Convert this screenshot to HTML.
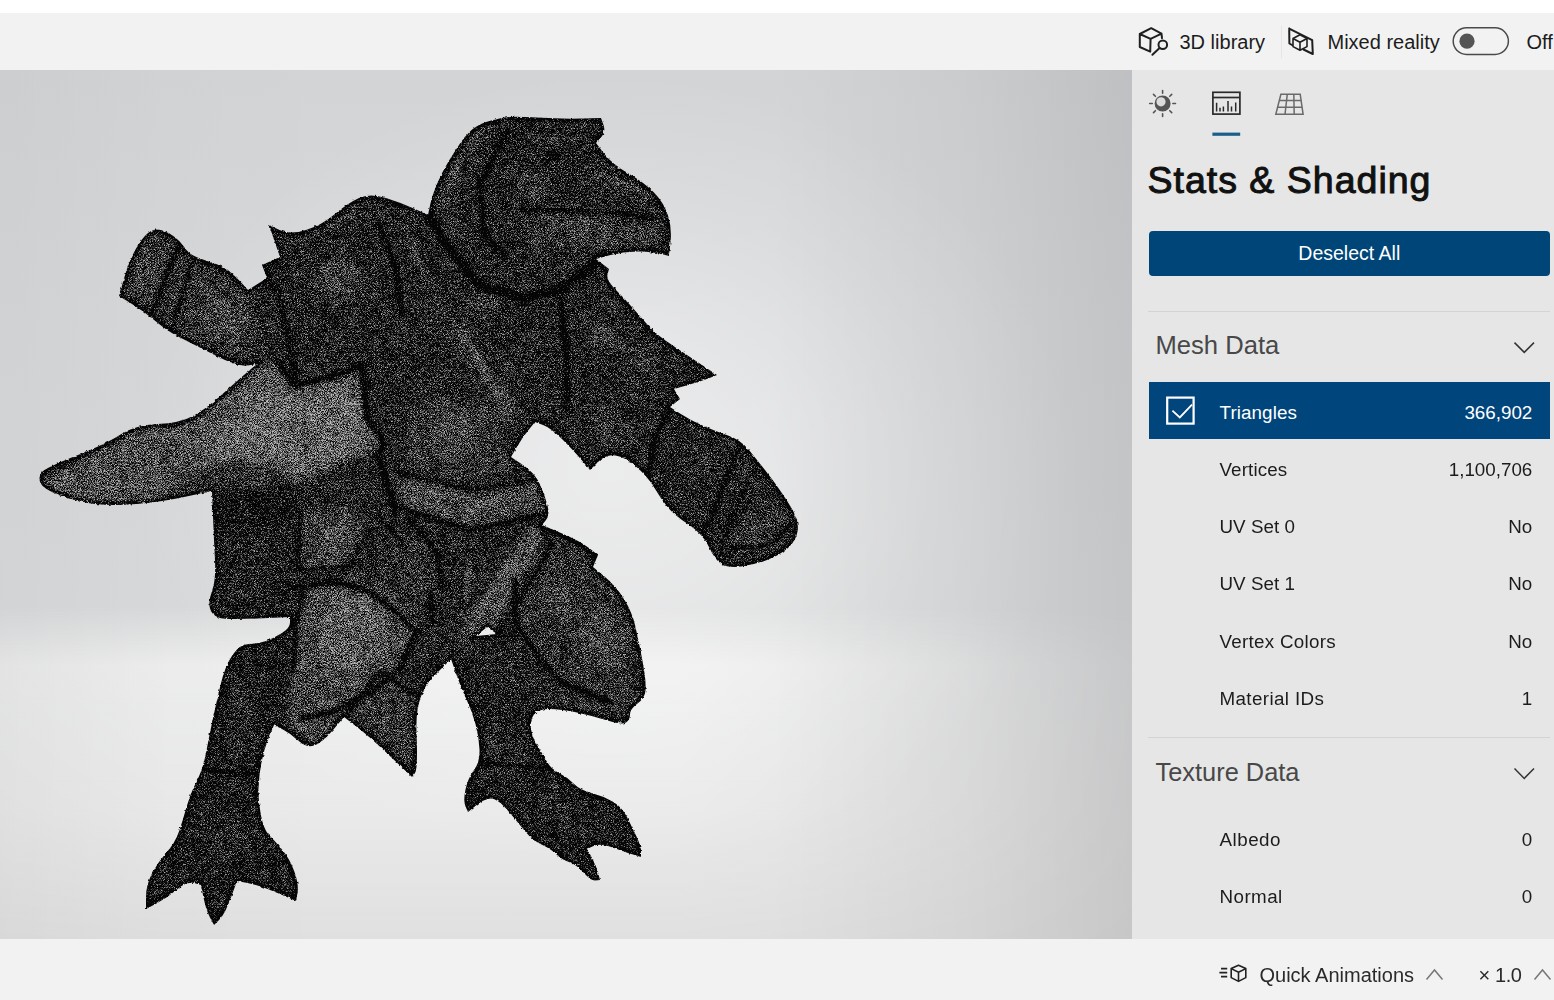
<!DOCTYPE html>
<html lang="en">
<head>
<meta charset="utf-8">
<title>3D Viewer</title>
<style>
html,body{margin:0;padding:0;}
body{width:1554px;height:1000px;overflow:hidden;background:#fff;font-family:"Liberation Sans",sans-serif;color:#1a1a1a;position:relative;}
.abs{position:absolute;}
#topbar{left:0;top:13px;width:1554px;height:57px;background:#f2f2f2;}
#bottombar{left:0;top:939px;width:1554px;height:61px;background:#f2f2f2;}
#viewport{left:0;top:70px;width:1132px;height:869px;overflow:hidden;background:#e4e4e4;}
#panel{left:1132px;top:70px;width:422px;height:869px;background:#e6e6e6;overflow:hidden;}
.t{position:absolute;white-space:nowrap;line-height:1;transform-origin:0 0;}
.row{position:absolute;left:17px;width:401px;height:57px;}
.row .lbl{position:absolute;left:71px;font-size:18.5px;top:19px;line-height:1;white-space:nowrap;}
.row .val{position:absolute;right:18px;font-size:18.5px;top:19px;line-height:1;white-space:nowrap;}
.sel{background:#004578;color:#fff;}
.hr{position:absolute;left:16px;width:402px;height:1px;background:#d2d2d2;}
.sec{position:absolute;left:23px;font-size:25px;color:#444;line-height:1;white-space:nowrap;}
</style>
</head>
<body>
<div id="topbar" class="abs"></div>
<div id="viewport" class="abs">

<svg class="abs" style="left:0;top:0" width="1132" height="870" viewBox="0 0 1132 870">
<defs>
<linearGradient id="bgv" x1="0" y1="0" x2="0" y2="1">
<stop offset="0" stop-color="#d3d4d6"/><stop offset="0.3" stop-color="#d7d8da"/><stop offset="0.62" stop-color="#d9dadb"/><stop offset="1" stop-color="#dcdcdc"/>
</linearGradient>
<radialGradient id="bgr" gradientUnits="userSpaceOnUse" cx="0" cy="0" r="1" gradientTransform="translate(610 400) scale(470 400)">
<stop offset="0" stop-color="#fff" stop-opacity="0.5"/><stop offset="0.35" stop-color="#fff" stop-opacity="0.36"/><stop offset="0.7" stop-color="#fff" stop-opacity="0.13"/><stop offset="1" stop-color="#fff" stop-opacity="0"/>
</radialGradient>
<linearGradient id="flv" x1="0" y1="0" x2="0" y2="1">
<stop offset="0.615" stop-color="#fff" stop-opacity="0"/><stop offset="0.685" stop-color="#fff" stop-opacity="0.55"/><stop offset="0.85" stop-color="#fff" stop-opacity="0.42"/><stop offset="1" stop-color="#fff" stop-opacity="0.12"/>
</linearGradient>
<linearGradient id="flh" x1="0" y1="0" x2="1" y2="0">
<stop offset="0" stop-color="#fff" stop-opacity="0.8"/><stop offset="0.15" stop-color="#fff" stop-opacity="1"/><stop offset="0.6" stop-color="#fff" stop-opacity="1"/><stop offset="0.85" stop-color="#fff" stop-opacity="0.5"/><stop offset="1" stop-color="#fff" stop-opacity="0.15"/>
</linearGradient>
<mask id="flm"><rect width="1132" height="870" fill="url(#flh)"/></mask>
<linearGradient id="bgh" x1="0" y1="0" x2="1" y2="0">
<stop offset="0" stop-color="#000008" stop-opacity="0.03"/><stop offset="0.15" stop-color="#000008" stop-opacity="0.01"/><stop offset="0.3" stop-color="#000008" stop-opacity="0"/><stop offset="0.68" stop-color="#000008" stop-opacity="0"/><stop offset="0.85" stop-color="#000008" stop-opacity="0.04"/><stop offset="1" stop-color="#000008" stop-opacity="0.095"/>
</linearGradient>
<filter id="rough" filterUnits="userSpaceOnUse" x="0" y="0" width="840" height="870"><feTurbulence type="fractalNoise" baseFrequency="0.35" numOctaves="2" seed="9" result="r"/><feDisplacementMap in="SourceGraphic" in2="r" scale="2.8" xChannelSelector="R" yChannelSelector="G"/></filter>
<mask id="sil" maskUnits="userSpaceOnUse" x="0" y="0" width="840" height="870"><path d="M148.0,163.0 Q154.0,158.0 161.0,160.0 Q168.0,162.0 174.0,166.5 Q180.0,171.0 183.0,175.5 Q186.0,180.0 189.5,183.0 Q193.0,186.0 201.5,189.0 Q210.0,192.0 217.5,194.5 Q225.0,197.0 231.5,203.0 Q238.0,209.0 243.0,214.5 L248.0,220.0 L257.5,214.0 L267.0,208.0 L264.5,201.5 L262.0,195.0 L271.0,191.0 L280.0,187.0 L274.5,171.0 L269.0,155.0 L279.5,160.0 Q290.0,165.0 306.0,160.0 Q322.0,155.0 335.0,144.0 Q348.0,133.0 359.0,128.0 Q370.0,123.0 386.0,128.0 Q402.0,133.0 415.0,139.0 L428.0,145.0 L430.0,135.5 Q432.0,126.0 437.0,114.0 Q442.0,102.0 448.5,91.5 Q455.0,81.0 460.0,73.5 Q465.0,66.0 471.0,60.5 Q477.0,55.0 486.0,52.0 Q495.0,49.0 504.0,47.5 Q513.0,46.0 537.0,47.5 Q561.0,49.0 581.0,48.5 L601.0,48.0 L603.5,55.0 Q606.0,62.0 601.0,67.5 L596.0,73.0 L604.0,83.5 Q612.0,94.0 628.5,103.5 Q645.0,113.0 654.5,123.0 Q664.0,133.0 668.0,145.5 Q672.0,158.0 670.5,172.0 L669.0,186.0 L661.5,184.0 Q654.0,182.0 639.5,181.5 Q625.0,181.0 610.5,185.0 L596.0,189.0 L602.5,194.0 L609.0,199.0 L607.5,204.5 Q606.0,210.0 615.5,219.5 Q625.0,229.0 635.0,240.5 Q645.0,252.0 651.0,258.5 Q657.0,265.0 673.5,276.0 Q690.0,287.0 703.5,296.0 L717.0,305.0 L709.5,308.0 Q702.0,311.0 688.0,315.0 L674.0,319.0 L677.0,324.0 L680.0,329.0 L675.0,333.0 L670.0,337.0 L680.0,343.5 Q690.0,350.0 702.5,355.5 Q715.0,361.0 728.0,365.5 Q741.0,370.0 749.0,380.0 Q757.0,390.0 765.0,400.0 Q773.0,410.0 781.5,422.5 Q790.0,435.0 794.5,443.5 Q799.0,452.0 797.5,461.5 Q796.0,471.0 788.0,478.0 Q780.0,485.0 767.0,490.0 Q754.0,495.0 741.0,496.5 Q728.0,498.0 721.5,494.0 Q715.0,490.0 709.0,477.0 Q703.0,464.0 688.5,454.5 Q674.0,445.0 667.5,437.0 Q661.0,429.0 654.5,418.0 Q648.0,407.0 636.5,397.0 Q625.0,387.0 615.5,385.5 Q606.0,384.0 598.0,392.0 L590.0,400.0 L582.0,390.5 Q574.0,381.0 562.5,369.5 Q551.0,358.0 543.0,355.0 L535.0,352.0 L528.5,360.0 Q522.0,368.0 516.5,377.5 L511.0,387.0 L523.0,395.0 Q535.0,403.0 540.0,414.5 Q545.0,426.0 547.5,435.5 Q550.0,445.0 546.0,450.0 L542.0,455.0 L561.0,463.0 Q580.0,471.0 589.0,478.0 L598.0,485.0 L595.5,491.0 L593.0,497.0 L604.5,506.5 Q616.0,516.0 624.0,529.0 Q632.0,542.0 635.0,555.0 Q638.0,568.0 640.5,580.5 Q643.0,593.0 644.5,603.0 Q646.0,613.0 645.5,620.5 Q645.0,628.0 637.5,633.5 Q630.0,639.0 630.0,644.5 Q630.0,650.0 626.0,652.5 Q622.0,655.0 607.5,650.5 Q593.0,646.0 577.0,642.5 Q561.0,639.0 549.5,639.0 Q538.0,639.0 534.0,644.5 Q530.0,650.0 531.0,658.5 Q532.0,667.0 537.0,675.0 Q542.0,683.0 546.5,691.0 Q551.0,699.0 559.0,703.0 Q567.0,707.0 573.5,713.5 Q580.0,720.0 591.5,723.0 Q603.0,726.0 612.5,731.5 Q622.0,737.0 627.0,747.0 Q632.0,757.0 636.5,766.5 Q641.0,776.0 641.0,781.5 L641.0,787.0 L633.0,784.5 Q625.0,782.0 612.5,777.5 Q600.0,773.0 593.5,776.0 L587.0,779.0 L591.5,787.0 Q596.0,795.0 598.0,802.5 L600.0,810.0 L595.5,810.5 Q591.0,811.0 584.0,803.0 Q577.0,795.0 569.0,792.0 Q561.0,789.0 556.0,784.0 Q551.0,779.0 541.5,774.5 Q532.0,770.0 524.0,760.0 Q516.0,750.0 506.5,739.0 Q497.0,728.0 490.5,728.5 Q484.0,729.0 476.0,735.5 L468.0,742.0 L465.5,736.5 Q463.0,731.0 465.5,719.5 Q468.0,708.0 474.0,700.0 Q480.0,692.0 479.5,679.5 Q479.0,667.0 475.5,654.0 Q472.0,641.0 466.5,629.5 Q461.0,618.0 456.0,603.5 L451.0,589.0 L433.0,607.0 Q415.0,625.0 416.5,662.0 Q418.0,699.0 415.0,703.0 L412.0,707.0 L391.0,687.0 Q370.0,667.0 357.0,657.0 L344.0,647.0 L333.0,660.0 Q322.0,673.0 314.0,675.5 Q306.0,678.0 298.0,670.5 Q290.0,663.0 282.0,659.0 L274.0,655.0 L269.0,667.0 Q264.0,679.0 261.5,692.0 Q259.0,705.0 258.5,718.0 Q258.0,731.0 261.0,745.5 Q264.0,760.0 269.0,765.0 Q274.0,770.0 282.0,779.5 Q290.0,789.0 294.5,802.0 Q299.0,815.0 297.5,823.0 L296.0,831.0 L288.0,827.5 Q280.0,824.0 269.0,819.5 Q258.0,815.0 247.5,813.0 L237.0,811.0 L231.0,827.5 Q225.0,844.0 219.5,849.5 L214.0,855.0 L210.0,847.5 Q206.0,840.0 203.5,827.5 L201.0,815.0 L194.0,813.0 Q187.0,811.0 177.0,819.5 Q167.0,828.0 156.5,833.5 L146.0,839.0 L146.0,827.0 Q146.0,815.0 152.0,803.5 Q158.0,792.0 166.5,782.5 Q175.0,773.0 179.0,761.5 Q183.0,750.0 186.5,737.0 Q190.0,724.0 196.5,711.5 Q203.0,699.0 206.0,683.0 Q209.0,667.0 212.5,650.5 Q216.0,634.0 220.5,615.0 Q225.0,596.0 232.5,585.0 Q240.0,574.0 249.0,574.0 Q258.0,574.0 266.0,571.0 Q274.0,568.0 282.0,563.0 Q290.0,558.0 290.0,552.5 L290.0,547.0 L257.5,548.5 Q225.0,550.0 218.5,547.5 Q212.0,545.0 210.0,538.5 Q208.0,532.0 212.0,521.0 Q216.0,510.0 215.0,490.5 Q214.0,471.0 213.0,446.0 L212.0,421.0 L186.5,426.5 Q161.0,432.0 137.0,434.0 Q113.0,436.0 95.0,434.0 Q77.0,432.0 60.0,425.5 Q43.0,419.0 40.5,413.0 Q38.0,407.0 41.5,402.5 Q45.0,398.0 75.5,386.0 Q106.0,374.0 120.5,364.5 Q135.0,355.0 157.5,354.0 Q180.0,353.0 193.0,346.0 Q206.0,339.0 222.0,324.5 Q238.0,310.0 247.5,302.0 L257.0,294.0 L247.5,295.5 Q238.0,297.0 215.5,285.5 Q193.0,274.0 180.0,267.5 Q167.0,261.0 156.0,251.5 Q145.0,242.0 132.0,234.0 L119.0,226.0 L124.0,208.5 Q129.0,191.0 135.5,179.5 Q142.0,168.0 148.0,163.0Z M476,566 L497,564 L487,557Z" fill="#fff" fill-rule="evenodd" filter="url(#rough)"/></mask>
<filter id="blur" x="-5%" y="-5%" width="110%" height="110%"><feGaussianBlur stdDeviation="4"/></filter>
<filter id="blur2" x="-5%" y="-5%" width="110%" height="110%"><feGaussianBlur stdDeviation="1.6"/></filter>
<filter id="dither" filterUnits="userSpaceOnUse" x="0" y="0" width="840" height="870" color-interpolation-filters="sRGB">
<feTurbulence type="fractalNoise" baseFrequency="1.3" numOctaves="1" seed="7" result="t"/>
<feColorMatrix in="t" type="matrix" values="1 0 0 0 0  1 0 0 0 0  1 0 0 0 0  0 0 0 0 1" result="n"/>
<feTurbulence type="fractalNoise" baseFrequency="0.1" numOctaves="2" seed="4" result="t2"/>
<feColorMatrix in="t2" type="matrix" values="1 0 0 0 0  1 0 0 0 0  1 0 0 0 0  0 0 0 0 1" result="n2"/>
<feComposite in="SourceGraphic" in2="n2" operator="arithmetic" k1="0" k2="1" k3="0.2" k4="-0.1" result="src2"/>
<feComposite in="src2" in2="n" operator="arithmetic" k1="0" k2="1" k3="1.5" k4="-0.75" result="s"/>
<feComponentTransfer in="s"><feFuncR type="linear" slope="2.2" intercept="-0.7320"/><feFuncG type="linear" slope="2.2" intercept="-0.7320"/><feFuncB type="linear" slope="2.2" intercept="-0.7320"/></feComponentTransfer>
<feComponentTransfer><feFuncR type="table" tableValues="0.02 0.74"/><feFuncG type="table" tableValues="0.02 0.74"/><feFuncB type="table" tableValues="0.02 0.74"/></feComponentTransfer>
<feGaussianBlur stdDeviation="0.42"/>
</filter>
</defs>
<rect width="1132" height="870" fill="url(#bgv)"/><rect width="1132" height="870" fill="url(#bgr)"/><rect width="1132" height="870" fill="url(#flv)" mask="url(#flm)"/><rect width="1132" height="870" fill="url(#bgh)"/>

<g mask="url(#sil)">
<g filter="url(#dither)">
<rect x="0" y="0" width="840" height="870" fill="rgb(94,94,94)"/>
<g filter="url(#blur)"><path d="M40.0,411.0 L106.0,376.0 L135.0,358.0 L180.0,355.0 L206.0,341.0 L240.0,312.0 L250.0,298.0 L277.0,291.0 L294.0,317.0 L334.0,307.0 L362.0,296.0 L365.0,327.0 L367.0,349.0 L384.0,371.0 L378.0,382.0 L360.0,385.0 L334.0,398.0 L303.0,413.0 L268.0,400.0 L224.0,400.0 L180.0,412.0 L144.0,436.0 L72.0,434.0Z" fill="rgb(131,131,131)" opacity="1"/>
<path d="M225.0,355.0 L262.0,315.0 L290.0,325.0 L340.0,315.0 L358.0,330.0 L362.0,360.0 L372.0,375.0 L340.0,388.0 L300.0,402.0 L265.0,388.0 L225.0,385.0 L200.0,392.0Z" fill="rgb(144,144,144)" opacity="1"/>
<path d="M70.0,402.0 L140.0,372.0 L200.0,366.0 L200.0,408.0 L140.0,424.0 L80.0,424.0Z" fill="rgb(127,127,127)" opacity="1"/>
<path d="M180.0,406.0 L224.0,394.0 L268.0,398.0 L303.0,416.0 L296.0,430.0 L212.0,423.0 L161.0,432.0Z" fill="rgb(105,105,105)" opacity="1"/>
<path d="M214.0,430.0 L290.0,422.0 L296.0,490.0 L290.0,546.0 L215.0,548.0 L210.0,530.0Z" fill="rgb(92,92,92)" opacity="1"/>
<path d="M214.0,422.0 L300.0,416.0 L298.0,450.0 L214.0,460.0Z" fill="rgb(78,78,78)" opacity="1"/>
<path d="M150.0,162.0 L178.0,174.0 L150.0,245.0 L122.0,226.0Z" fill="rgb(110,110,110)" opacity="1"/>
<path d="M182.0,180.0 L248.0,222.0 L265.0,260.0 L252.0,292.0 L200.0,275.0 L160.0,248.0Z" fill="rgb(106,106,106)" opacity="1"/>
<ellipse cx="222" cy="252" rx="22" ry="16" fill="rgb(121,121,121)" opacity="1" transform="rotate(25 222 252)"/>
<ellipse cx="340" cy="215" rx="26" ry="22" fill="rgb(106,106,106)" opacity="1" transform="rotate(-20 340 215)"/>
<path d="M492.0,58.0 L465.0,90.0 L450.0,130.0 L446.0,165.0" fill="none" stroke="rgb(105,105,105)" stroke-width="10" stroke-linecap="round" stroke-linejoin="round" opacity="1"/>
<path d="M530.0,145.0 L600.0,140.0 L655.0,162.0 L655.0,180.0 L600.0,176.0 L560.0,182.0 L530.0,170.0Z" fill="rgb(112,112,112)" opacity="1"/>
<ellipse cx="600" cy="105" rx="30" ry="14" fill="rgb(101,101,101)" opacity="1" transform="rotate(25 600 105)"/>
<ellipse cx="482" cy="230" rx="20" ry="14" fill="rgb(106,106,106)" opacity="1" transform="rotate(-20 482 230)"/>
<ellipse cx="436" cy="248" rx="16" ry="12" fill="rgb(103,103,103)" opacity="1" transform="rotate(0 436 248)"/>
<path d="M405.0,340.0 L440.0,325.0 L500.0,340.0 L512.0,395.0 L470.0,410.0 L410.0,400.0Z" fill="rgb(110,110,110)" opacity="1"/>
<ellipse cx="456" cy="362" rx="24" ry="26" fill="rgb(119,119,119)" opacity="1" transform="rotate(0 456 362)"/>
<path d="M448.0,260.0 L462.0,255.0 L520.0,338.0 L506.0,348.0Z" fill="rgb(121,121,121)" opacity="1"/>
<ellipse cx="606" cy="267" rx="18" ry="14" fill="rgb(108,108,108)" opacity="1" transform="rotate(30 606 267)"/>
<ellipse cx="642" cy="290" rx="18" ry="12" fill="rgb(106,106,106)" opacity="1" transform="rotate(30 642 290)"/>
<ellipse cx="612" cy="358" rx="24" ry="15" fill="rgb(108,108,108)" opacity="1" transform="rotate(30 612 358)"/>
<ellipse cx="705" cy="387" rx="14" ry="7" fill="rgb(106,106,106)" opacity="1" transform="rotate(35 705 387)"/>
<ellipse cx="758" cy="462" rx="26" ry="18" fill="rgb(106,106,106)" opacity="1" transform="rotate(-25 758 462)"/>
<path d="M398.0,404.0 L470.0,422.0 L540.0,412.0 L545.0,442.0 L470.0,457.0 L398.0,437.0Z" fill="rgb(122,122,122)" opacity="1"/>
<path d="M300.0,442.0 L350.0,434.0 L368.0,460.0 L350.0,495.0 L306.0,500.0Z" fill="rgb(117,117,117)" opacity="1"/>
<path d="M303.0,520.0 L355.0,506.0 L401.0,528.0 L417.0,561.0 L401.0,597.0 L370.0,623.0 L329.0,643.0 L301.0,648.0 L293.0,602.0 L296.0,556.0Z" fill="rgb(122,122,122)" opacity="1"/>
<ellipse cx="352" cy="564" rx="34" ry="38" fill="rgb(137,137,137)" opacity="1" transform="rotate(20 352 564)"/>
<path d="M292.0,580.0 L350.0,620.0 L352.0,674.0 L322.0,673.0 L306.0,678.0 L290.0,663.0Z" fill="rgb(121,121,121)" opacity="1"/>
<path d="M372.0,458.0 L420.0,470.0 L436.0,520.0 L420.0,555.0 L395.0,530.0 L372.0,500.0Z" fill="rgb(101,101,101)" opacity="1"/>
<ellipse cx="418" cy="502" rx="14" ry="30" fill="rgb(108,108,108)" opacity="1" transform="rotate(0 418 502)"/>
<path d="M532.0,453.0 L546.0,463.0 L487.0,561.0 L462.0,572.0 L468.0,545.0 L510.0,483.0Z" fill="rgb(127,127,127)" opacity="1"/>
<path d="M380.0,600.0 L413.0,620.0 L416.0,700.0 L350.0,645.0 L340.0,630.0Z" fill="rgb(110,110,110)" opacity="1"/>
<path d="M540.0,460.0 L598.0,486.0 L632.0,542.0 L643.0,602.0 L612.0,633.0 L561.0,613.0 L535.0,582.0 L515.0,551.0 L520.0,500.0Z" fill="rgb(105,105,105)" opacity="1"/>
<ellipse cx="562" cy="527" rx="16" ry="24" fill="rgb(117,117,117)" opacity="1" transform="rotate(-20 562 527)"/>
<ellipse cx="602" cy="570" rx="22" ry="34" fill="rgb(119,119,119)" opacity="1" transform="rotate(-15 602 570)"/>
<path d="M540.0,620.0 L600.0,630.0 L640.0,620.0 L630.0,642.0 L600.0,646.0 L545.0,638.0Z" fill="rgb(106,106,106)" opacity="1"/>
<path d="M240.0,574.0 L290.0,570.0 L275.0,655.0 L262.0,730.0 L300.0,815.0 L296.0,831.0 L214.0,855.0 L146.0,839.0 L146.0,815.0 L190.0,724.0 L216.0,634.0Z" fill="rgb(88,88,88)" opacity="1"/>
<path d="M455.0,590.0 L480.0,670.0 L480.0,695.0 L463.0,731.0 L468.0,742.0 L497.0,728.0 L600.0,810.0 L641.0,787.0 L622.0,737.0 L551.0,699.0 L530.0,650.0 L538.0,639.0 L500.0,630.0Z" fill="rgb(88,88,88)" opacity="1"/>
<ellipse cx="242" cy="650" rx="12" ry="46" fill="rgb(100,100,100)" opacity="1" transform="rotate(8 242 650)"/>
<ellipse cx="228" cy="770" rx="18" ry="26" fill="rgb(96,96,96)" opacity="1" transform="rotate(15 228 770)"/>
<ellipse cx="560" cy="745" rx="30" ry="14" fill="rgb(96,96,96)" opacity="1" transform="rotate(35 560 745)"/>
<ellipse cx="505" cy="682" rx="18" ry="30" fill="rgb(101,101,101)" opacity="1" transform="rotate(-25 505 682)"/>
<path d="M500.0,55.0 L600.0,52.0 L600.0,75.0 L560.0,130.0 L520.0,135.0 L490.0,110.0Z" fill="rgb(92,92,92)" opacity="1"/></g>
<g filter="url(#blur2)"><path d="M262.0,195.0 L280.0,230.0 L290.0,275.0 L296.0,308.0" fill="none" stroke="rgb(65,65,65)" stroke-width="6" stroke-linecap="round" stroke-linejoin="round" opacity="1"/>
<path d="M180.0,172.0 L152.0,242.0" fill="none" stroke="rgb(47,47,47)" stroke-width="4" stroke-linecap="round" stroke-linejoin="round" opacity="1"/>
<path d="M193.0,188.0 L171.0,264.0" fill="none" stroke="rgb(52,52,52)" stroke-width="3" stroke-linecap="round" stroke-linejoin="round" opacity="1"/>
<path d="M380.0,155.0 L396.0,200.0 L402.0,245.0" fill="none" stroke="rgb(47,47,47)" stroke-width="5" stroke-linecap="round" stroke-linejoin="round" opacity="1"/>
<path d="M428.0,145.0 L450.0,180.0 L480.0,215.0 L520.0,228.0 L560.0,220.0 L596.0,192.0" fill="none" stroke="rgb(43,43,43)" stroke-width="8" stroke-linecap="round" stroke-linejoin="round" opacity="1"/>
<path d="M506.0,62.0 L480.0,115.0 L484.0,165.0 L506.0,187.0" fill="none" stroke="rgb(43,43,43)" stroke-width="5" stroke-linecap="round" stroke-linejoin="round" opacity="1"/>
<path d="M522.0,139.0 L606.0,142.0 L654.0,149.0" fill="none" stroke="rgb(47,47,47)" stroke-width="3" stroke-linecap="round" stroke-linejoin="round" opacity="1"/>
<ellipse cx="554" cy="86" rx="8" ry="5" fill="rgb(57,57,57)" opacity="1" transform="rotate(0 554 86)"/>
<path d="M561.0,229.0 L566.0,280.0 L567.0,340.0" fill="none" stroke="rgb(47,47,47)" stroke-width="5" stroke-linecap="round" stroke-linejoin="round" opacity="1"/>
<path d="M600.0,192.0 L625.0,230.0 L657.0,265.0" fill="none" stroke="rgb(52,52,52)" stroke-width="4" stroke-linecap="round" stroke-linejoin="round" opacity="1"/>
<path d="M362.0,294.0 L366.0,330.0 L368.0,350.0 L385.0,372.0 L378.0,384.0 L386.0,410.0 L396.0,442.0" fill="none" stroke="rgb(43,43,43)" stroke-width="6" stroke-linecap="round" stroke-linejoin="round" opacity="1"/>
<path d="M277.0,290.0 L294.0,316.0 L334.0,306.0 L362.0,295.0" fill="none" stroke="rgb(43,43,43)" stroke-width="5" stroke-linecap="round" stroke-linejoin="round" opacity="1"/>
<path d="M303.0,318.0 L307.0,400.0" fill="none" stroke="rgb(115,115,115)" stroke-width="2.5" stroke-linecap="round" stroke-linejoin="round" opacity="1"/>
<path d="M400.0,438.0 L470.0,460.0 L545.0,444.0" fill="none" stroke="rgb(47,47,47)" stroke-width="4" stroke-linecap="round" stroke-linejoin="round" opacity="1"/>
<path d="M398.0,402.0 L470.0,420.0 L540.0,410.0" fill="none" stroke="rgb(57,57,57)" stroke-width="3" stroke-linecap="round" stroke-linejoin="round" opacity="1"/>
<path d="M300.0,442.0 L298.0,500.0 L350.0,496.0 L370.0,460.0" fill="none" stroke="rgb(50,50,50)" stroke-width="3" stroke-linecap="round" stroke-linejoin="round" opacity="1"/>
<path d="M417.0,561.0 L401.0,597.0 L370.0,623.0 L329.0,643.0 L301.0,648.0" fill="none" stroke="rgb(47,47,47)" stroke-width="5" stroke-linecap="round" stroke-linejoin="round" opacity="1"/>
<path d="M303.0,520.0 L296.0,556.0 L293.0,602.0" fill="none" stroke="rgb(50,50,50)" stroke-width="4" stroke-linecap="round" stroke-linejoin="round" opacity="1"/>
<path d="M381.0,451.0 L415.0,482.0 L429.0,518.0 L433.0,554.0" fill="none" stroke="rgb(43,43,43)" stroke-width="4" stroke-linecap="round" stroke-linejoin="round" opacity="1"/>
<path d="M406.0,446.0 L437.0,482.0 L442.0,518.0" fill="none" stroke="rgb(43,43,43)" stroke-width="3.5" stroke-linecap="round" stroke-linejoin="round" opacity="1"/>
<path d="M294.0,518.0 L334.0,511.0 L370.0,522.0 L397.0,543.0 L417.0,563.0" fill="none" stroke="rgb(43,43,43)" stroke-width="4.5" stroke-linecap="round" stroke-linejoin="round" opacity="1"/>
<path d="M398.0,460.0 L420.0,490.0 L428.0,520.0" fill="none" stroke="rgb(115,115,115)" stroke-width="4" stroke-linecap="round" stroke-linejoin="round" opacity="1"/>
<path d="M470.0,490.0 L466.0,530.0" fill="none" stroke="rgb(122,122,122)" stroke-width="6" stroke-linecap="round" stroke-linejoin="round" opacity="1"/>
<path d="M536.0,471.0 L490.0,556.0" fill="none" stroke="rgb(133,133,133)" stroke-width="5" stroke-linecap="round" stroke-linejoin="round" opacity="1"/>
<path d="M543.0,462.0 L552.0,475.0 L500.0,562.0" fill="none" stroke="rgb(43,43,43)" stroke-width="3" stroke-linecap="round" stroke-linejoin="round" opacity="1"/>
<path d="M515.0,510.0 L515.0,551.0 L535.0,582.0 L561.0,613.0 L612.0,633.0" fill="none" stroke="rgb(47,47,47)" stroke-width="5" stroke-linecap="round" stroke-linejoin="round" opacity="1"/>
<path d="M541.0,457.0 L580.0,473.0 L598.0,487.0" fill="none" stroke="rgb(50,50,50)" stroke-width="4" stroke-linecap="round" stroke-linejoin="round" opacity="1"/>
<path d="M670.0,337.0 L655.0,370.0 L648.0,405.0" fill="none" stroke="rgb(47,47,47)" stroke-width="5" stroke-linecap="round" stroke-linejoin="round" opacity="1"/>
<path d="M741.0,371.0 L722.0,420.0 L704.0,463.0" fill="none" stroke="rgb(50,50,50)" stroke-width="4" stroke-linecap="round" stroke-linejoin="round" opacity="1"/>
<path d="M757.0,392.0 L738.0,435.0 L720.0,482.0" fill="none" stroke="rgb(55,55,55)" stroke-width="3" stroke-linecap="round" stroke-linejoin="round" opacity="1"/>
<path d="M344.0,647.0 L380.0,602.0 L415.0,625.0" fill="none" stroke="rgb(50,50,50)" stroke-width="4" stroke-linecap="round" stroke-linejoin="round" opacity="1"/>
<path d="M259.0,705.0 L203.0,699.0" fill="none" stroke="rgb(39,39,39)" stroke-width="3" stroke-linecap="round" stroke-linejoin="round" opacity="1"/>
<path d="M480.0,692.0 L551.0,699.0" fill="none" stroke="rgb(39,39,39)" stroke-width="3" stroke-linecap="round" stroke-linejoin="round" opacity="1"/>
<path d="M480.0,62.0 L455.0,100.0 L442.0,136.0" fill="none" stroke="rgb(117,117,117)" stroke-width="7" stroke-linecap="round" stroke-linejoin="round" opacity="1"/>
<path d="M535.0,72.0 L580.0,69.0" fill="none" stroke="rgb(112,112,112)" stroke-width="5" stroke-linecap="round" stroke-linejoin="round" opacity="1"/>
<ellipse cx="534" cy="116" rx="18" ry="14" fill="rgb(110,110,110)" opacity="1" transform="rotate(0 534 116)"/>
<path d="M600.0,104.0 L651.0,126.0" fill="none" stroke="rgb(114,114,114)" stroke-width="7" stroke-linecap="round" stroke-linejoin="round" opacity="1"/>
<ellipse cx="146" cy="198" rx="9" ry="20" fill="rgb(119,119,119)" opacity="1" transform="rotate(25 146 198)"/>
<path d="M200.0,213.0 L245.0,252.0" fill="none" stroke="rgb(121,121,121)" stroke-width="10" stroke-linecap="round" stroke-linejoin="round" opacity="1"/>
<ellipse cx="338" cy="206" rx="20" ry="17" fill="rgb(117,117,117)" opacity="1" transform="rotate(-20 338 206)"/>
<path d="M290.0,174.0 L322.0,162.0 L354.0,142.0" fill="none" stroke="rgb(110,110,110)" stroke-width="5" stroke-linecap="round" stroke-linejoin="round" opacity="1"/>
<path d="M404.0,158.0 L428.0,213.0" fill="none" stroke="rgb(108,108,108)" stroke-width="6" stroke-linecap="round" stroke-linejoin="round" opacity="1"/>
<path d="M455.0,255.0 L512.0,340.0" fill="none" stroke="rgb(126,126,126)" stroke-width="5" stroke-linecap="round" stroke-linejoin="round" opacity="1"/>
<ellipse cx="474" cy="439" rx="8" ry="7" fill="rgb(136,136,136)" opacity="1" transform="rotate(0 474 439)"/>
<path d="M410.0,416.0 L460.0,430.0" fill="none" stroke="rgb(130,130,130)" stroke-width="6" stroke-linecap="round" stroke-linejoin="round" opacity="1"/>
<path d="M490.0,430.0 L535.0,424.0" fill="none" stroke="rgb(129,129,129)" stroke-width="6" stroke-linecap="round" stroke-linejoin="round" opacity="1"/>
<ellipse cx="335" cy="465" rx="16" ry="18" fill="rgb(126,126,126)" opacity="1" transform="rotate(0 335 465)"/>
<ellipse cx="606" cy="266" rx="14" ry="9" fill="rgb(119,119,119)" opacity="1" transform="rotate(30 606 266)"/>
<ellipse cx="640" cy="288" rx="14" ry="8" fill="rgb(115,115,115)" opacity="1" transform="rotate(30 640 288)"/>
<path d="M690.0,355.0 L735.0,375.0" fill="none" stroke="rgb(106,106,106)" stroke-width="6" stroke-linecap="round" stroke-linejoin="round" opacity="1"/>
<path d="M745.0,400.0 L775.0,445.0" fill="none" stroke="rgb(108,108,108)" stroke-width="6" stroke-linecap="round" stroke-linejoin="round" opacity="1"/>
<ellipse cx="756" cy="464" rx="20" ry="10" fill="rgb(115,115,115)" opacity="1" transform="rotate(-30 756 464)"/>
<path d="M728.0,478.0 L770.0,475.0 L790.0,455.0" fill="none" stroke="rgb(47,47,47)" stroke-width="3" stroke-linecap="round" stroke-linejoin="round" opacity="1"/></g>
<path d="M148.0,163.0 Q154.0,158.0 161.0,160.0 Q168.0,162.0 174.0,166.5 Q180.0,171.0 183.0,175.5 Q186.0,180.0 189.5,183.0 Q193.0,186.0 201.5,189.0 Q210.0,192.0 217.5,194.5 Q225.0,197.0 231.5,203.0 Q238.0,209.0 243.0,214.5 L248.0,220.0 L257.5,214.0 L267.0,208.0 L264.5,201.5 L262.0,195.0 L271.0,191.0 L280.0,187.0 L274.5,171.0 L269.0,155.0 L279.5,160.0 Q290.0,165.0 306.0,160.0 Q322.0,155.0 335.0,144.0 Q348.0,133.0 359.0,128.0 Q370.0,123.0 386.0,128.0 Q402.0,133.0 415.0,139.0 L428.0,145.0 L430.0,135.5 Q432.0,126.0 437.0,114.0 Q442.0,102.0 448.5,91.5 Q455.0,81.0 460.0,73.5 Q465.0,66.0 471.0,60.5 Q477.0,55.0 486.0,52.0 Q495.0,49.0 504.0,47.5 Q513.0,46.0 537.0,47.5 Q561.0,49.0 581.0,48.5 L601.0,48.0 L603.5,55.0 Q606.0,62.0 601.0,67.5 L596.0,73.0 L604.0,83.5 Q612.0,94.0 628.5,103.5 Q645.0,113.0 654.5,123.0 Q664.0,133.0 668.0,145.5 Q672.0,158.0 670.5,172.0 L669.0,186.0 L661.5,184.0 Q654.0,182.0 639.5,181.5 Q625.0,181.0 610.5,185.0 L596.0,189.0 L602.5,194.0 L609.0,199.0 L607.5,204.5 Q606.0,210.0 615.5,219.5 Q625.0,229.0 635.0,240.5 Q645.0,252.0 651.0,258.5 Q657.0,265.0 673.5,276.0 Q690.0,287.0 703.5,296.0 L717.0,305.0 L709.5,308.0 Q702.0,311.0 688.0,315.0 L674.0,319.0 L677.0,324.0 L680.0,329.0 L675.0,333.0 L670.0,337.0 L680.0,343.5 Q690.0,350.0 702.5,355.5 Q715.0,361.0 728.0,365.5 Q741.0,370.0 749.0,380.0 Q757.0,390.0 765.0,400.0 Q773.0,410.0 781.5,422.5 Q790.0,435.0 794.5,443.5 Q799.0,452.0 797.5,461.5 Q796.0,471.0 788.0,478.0 Q780.0,485.0 767.0,490.0 Q754.0,495.0 741.0,496.5 Q728.0,498.0 721.5,494.0 Q715.0,490.0 709.0,477.0 Q703.0,464.0 688.5,454.5 Q674.0,445.0 667.5,437.0 Q661.0,429.0 654.5,418.0 Q648.0,407.0 636.5,397.0 Q625.0,387.0 615.5,385.5 Q606.0,384.0 598.0,392.0 L590.0,400.0 L582.0,390.5 Q574.0,381.0 562.5,369.5 Q551.0,358.0 543.0,355.0 L535.0,352.0 L528.5,360.0 Q522.0,368.0 516.5,377.5 L511.0,387.0 L523.0,395.0 Q535.0,403.0 540.0,414.5 Q545.0,426.0 547.5,435.5 Q550.0,445.0 546.0,450.0 L542.0,455.0 L561.0,463.0 Q580.0,471.0 589.0,478.0 L598.0,485.0 L595.5,491.0 L593.0,497.0 L604.5,506.5 Q616.0,516.0 624.0,529.0 Q632.0,542.0 635.0,555.0 Q638.0,568.0 640.5,580.5 Q643.0,593.0 644.5,603.0 Q646.0,613.0 645.5,620.5 Q645.0,628.0 637.5,633.5 Q630.0,639.0 630.0,644.5 Q630.0,650.0 626.0,652.5 Q622.0,655.0 607.5,650.5 Q593.0,646.0 577.0,642.5 Q561.0,639.0 549.5,639.0 Q538.0,639.0 534.0,644.5 Q530.0,650.0 531.0,658.5 Q532.0,667.0 537.0,675.0 Q542.0,683.0 546.5,691.0 Q551.0,699.0 559.0,703.0 Q567.0,707.0 573.5,713.5 Q580.0,720.0 591.5,723.0 Q603.0,726.0 612.5,731.5 Q622.0,737.0 627.0,747.0 Q632.0,757.0 636.5,766.5 Q641.0,776.0 641.0,781.5 L641.0,787.0 L633.0,784.5 Q625.0,782.0 612.5,777.5 Q600.0,773.0 593.5,776.0 L587.0,779.0 L591.5,787.0 Q596.0,795.0 598.0,802.5 L600.0,810.0 L595.5,810.5 Q591.0,811.0 584.0,803.0 Q577.0,795.0 569.0,792.0 Q561.0,789.0 556.0,784.0 Q551.0,779.0 541.5,774.5 Q532.0,770.0 524.0,760.0 Q516.0,750.0 506.5,739.0 Q497.0,728.0 490.5,728.5 Q484.0,729.0 476.0,735.5 L468.0,742.0 L465.5,736.5 Q463.0,731.0 465.5,719.5 Q468.0,708.0 474.0,700.0 Q480.0,692.0 479.5,679.5 Q479.0,667.0 475.5,654.0 Q472.0,641.0 466.5,629.5 Q461.0,618.0 456.0,603.5 L451.0,589.0 L433.0,607.0 Q415.0,625.0 416.5,662.0 Q418.0,699.0 415.0,703.0 L412.0,707.0 L391.0,687.0 Q370.0,667.0 357.0,657.0 L344.0,647.0 L333.0,660.0 Q322.0,673.0 314.0,675.5 Q306.0,678.0 298.0,670.5 Q290.0,663.0 282.0,659.0 L274.0,655.0 L269.0,667.0 Q264.0,679.0 261.5,692.0 Q259.0,705.0 258.5,718.0 Q258.0,731.0 261.0,745.5 Q264.0,760.0 269.0,765.0 Q274.0,770.0 282.0,779.5 Q290.0,789.0 294.5,802.0 Q299.0,815.0 297.5,823.0 L296.0,831.0 L288.0,827.5 Q280.0,824.0 269.0,819.5 Q258.0,815.0 247.5,813.0 L237.0,811.0 L231.0,827.5 Q225.0,844.0 219.5,849.5 L214.0,855.0 L210.0,847.5 Q206.0,840.0 203.5,827.5 L201.0,815.0 L194.0,813.0 Q187.0,811.0 177.0,819.5 Q167.0,828.0 156.5,833.5 L146.0,839.0 L146.0,827.0 Q146.0,815.0 152.0,803.5 Q158.0,792.0 166.5,782.5 Q175.0,773.0 179.0,761.5 Q183.0,750.0 186.5,737.0 Q190.0,724.0 196.5,711.5 Q203.0,699.0 206.0,683.0 Q209.0,667.0 212.5,650.5 Q216.0,634.0 220.5,615.0 Q225.0,596.0 232.5,585.0 Q240.0,574.0 249.0,574.0 Q258.0,574.0 266.0,571.0 Q274.0,568.0 282.0,563.0 Q290.0,558.0 290.0,552.5 L290.0,547.0 L257.5,548.5 Q225.0,550.0 218.5,547.5 Q212.0,545.0 210.0,538.5 Q208.0,532.0 212.0,521.0 Q216.0,510.0 215.0,490.5 Q214.0,471.0 213.0,446.0 L212.0,421.0 L186.5,426.5 Q161.0,432.0 137.0,434.0 Q113.0,436.0 95.0,434.0 Q77.0,432.0 60.0,425.5 Q43.0,419.0 40.5,413.0 Q38.0,407.0 41.5,402.5 Q45.0,398.0 75.5,386.0 Q106.0,374.0 120.5,364.5 Q135.0,355.0 157.5,354.0 Q180.0,353.0 193.0,346.0 Q206.0,339.0 222.0,324.5 Q238.0,310.0 247.5,302.0 L257.0,294.0 L247.5,295.5 Q238.0,297.0 215.5,285.5 Q193.0,274.0 180.0,267.5 Q167.0,261.0 156.0,251.5 Q145.0,242.0 132.0,234.0 L119.0,226.0 L124.0,208.5 Q129.0,191.0 135.5,179.5 Q142.0,168.0 148.0,163.0Z M476,566 L497,564 L487,557Z" fill="none" stroke="#000" stroke-opacity="0.5" stroke-width="6" filter="url(#blur2)"/>
</g>
</g>
</svg>

</div>
<div id="panel" class="abs">
<!--PANEL-->
</div>
<div id="bottombar" class="abs"></div>
<div class="t" style="top:31.57px;font-size:20px;color:#1c1c1c;font-weight:400;left:1179.5px;">3D library</div>
<div class="t" style="top:31.57px;font-size:20px;color:#1c1c1c;font-weight:400;left:1327.5px;">Mixed reality</div>
<div class="t" style="top:31.57px;font-size:20px;color:#1c1c1c;font-weight:400;left:1526.5px;">Off</div>
<svg class="abs" style="left:1132px;top:20px" width="422" height="44" viewBox="1132 20 422 44" fill="none" stroke="#1f1f1f" stroke-width="2" stroke-linejoin="round" stroke-linecap="round">
<path d="M1151.2,28.2 L1139.8,34 L1139.8,47 L1150.2,51.6 L1150.6,38.8 L1139.8,34 M1150.6,38.8 L1161.5,33.6 L1151.2,28.2 M1161.5,33.6 L1162,38.2"/>
<circle cx="1162.8" cy="44.7" r="4.3"/>
<path d="M1159.6,48 L1152.4,54.8"/>
<path d="M1289.2,28.6 L1312.2,40.2 L1312.8,54 L1303.5,49.5 M1289.2,28.6 L1289.4,43.5 L1292,45"/>
<path d="M1300,34.8 L1307,38.5 L1307,46.6 L1300,50.2 L1293,46.6 L1293,38.5 Z M1293,38.5 L1300,42.2 L1307,38.5 M1300,42.2 L1300,50.2" stroke-width="1.6"/>
<line x1="1281.5" y1="26" x2="1281.5" y2="58" stroke="#e6e6e6" stroke-width="1"/>
<rect x="1453.2" y="27.8" width="55.2" height="26.6" rx="13.3" stroke="#4a4a4a" stroke-width="1.5"/>
<circle cx="1467" cy="41.2" r="7.6" fill="#555" stroke="none"/>
</svg>
<svg class="abs" style="left:1140px;top:84px" width="180" height="56" viewBox="1140 84 180 56" fill="none" stroke-linecap="round">
<g stroke="#555" stroke-width="1.6">
<circle cx="1162.6" cy="103.5" r="7.2" fill="#555"/>
<circle cx="1161" cy="101.8" r="4.6" fill="#dcdcdc" stroke="none"/>
<path d="M1162.6,90.6v2.6 M1162.6,113.8v2.6 M1149.7,103.5h2.6 M1172.9,103.5h2.6 M1153.5,94.4l1.9,1.9 M1169.8,110.7l1.9,1.9 M1171.7,94.4l-1.9,1.9 M1155.4,110.7l-1.9,1.9"/>
</g>
<g stroke="#2a2a2a" stroke-width="1.7" stroke-linecap="butt">
<rect x="1212.9" y="92.3" width="27" height="21.8" />
<path d="M1212.9,97.5h27"/>
<path d="M1216.6,111.6V102.8 M1220,111.6V107.8 M1223.4,111.6V106.6 M1228,111.6V101 M1231.5,111.6V106.6 M1235.7,111.6V102.6" stroke-width="1.5"/>
</g>
<g stroke="#6a6a6a" stroke-width="1.5" stroke-linecap="butt" stroke-linejoin="miter">
<path d="M1280.9,94.2 H1300.2 L1303.1,114.3 H1275.8 Z"/>
<path d="M1279.4,100.5 H1301.1 M1277.6,107.3 H1302.1 M1287.3,94.2 L1285,114.3 M1293.8,94.2 L1294.2,114.3"/>
</g>
<rect x="1212.4" y="132.6" width="27.8" height="3.2" fill="#1b5e8c" stroke="none"/>
</svg>
<div class="t" style="top:161.76px;font-size:37.5px;color:#111;font-weight:400;-webkit-text-stroke:1px #111;letter-spacing:1.0px;left:1147.5px;">Stats &amp; Shading</div>
<div class="abs" style="left:1149px;top:230.5px;width:400.5px;height:45.5px;background:#004578;border-radius:4px;"></div>
<div class="t" style="top:243.69px;font-size:19.5px;color:#fff;font-weight:400;left:1149.3px;width:400px;text-align:center;">Deselect All</div>
<div class="abs" style="left:1148px;top:311px;width:402px;height:1px;background:#d4d4d4"></div>
<div class="abs" style="left:1148px;top:737px;width:402px;height:1px;background:#d4d4d4"></div>
<div class="t" style="top:332.93px;font-size:25.6px;color:#484848;font-weight:400;left:1155.5px;">Mesh Data</div>
<div class="t" style="top:759.50px;font-size:25.4px;color:#484848;font-weight:400;left:1155.5px;">Texture Data</div>
<svg class="abs" style="left:0;top:0;pointer-events:none" width="1554" height="1000"><path d="M1514.5,342.6 L1524.25,352.4 L1534,342.6" fill="none" stroke="#333" stroke-width="1.5"/></svg>
<svg class="abs" style="left:0;top:0;pointer-events:none" width="1554" height="1000"><path d="M1514.5,768.4 L1524.25,778.4 L1534,768.4" fill="none" stroke="#333" stroke-width="1.5"/></svg>
<div class="abs" style="left:1149px;top:382px;width:400.5px;height:56.5px;background:#00457c;"></div>
<svg class="abs" style="left:1160px;top:390px" width="44" height="44" viewBox="1160 390 44 44" fill="none" stroke="#fff">
<rect x="1167.2" y="397.6" width="26.4" height="26" stroke-width="2.2"/>
<path d="M1172.4,410.6 L1179.8,417.4 L1192,404.6" stroke-width="1.8"/>
</svg>
<div class="t" style="top:403.69px;font-size:18.8px;color:#fff;font-weight:400;letter-spacing:0.1px;left:1219.5px;">Triangles</div>
<div class="t" style="top:403.69px;font-size:18.8px;color:#fff;font-weight:400;right:21.700000000000045px;">366,902</div>
<div class="t" style="top:461.29px;font-size:18.8px;color:#1c1c1c;font-weight:400;letter-spacing:0.12px;left:1219.5px;">Vertices</div>
<div class="t" style="top:461.29px;font-size:18.8px;color:#1c1c1c;font-weight:400;right:21.700000000000045px;">1,100,706</div>
<div class="t" style="top:518.39px;font-size:18.8px;color:#1c1c1c;font-weight:400;letter-spacing:0.05px;left:1219.5px;">UV Set 0</div>
<div class="t" style="top:518.39px;font-size:18.8px;color:#1c1c1c;font-weight:400;right:21.700000000000045px;">No</div>
<div class="t" style="top:575.49px;font-size:18.8px;color:#1c1c1c;font-weight:400;letter-spacing:0.05px;left:1219.5px;">UV Set 1</div>
<div class="t" style="top:575.49px;font-size:18.8px;color:#1c1c1c;font-weight:400;right:21.700000000000045px;">No</div>
<div class="t" style="top:632.69px;font-size:18.8px;color:#1c1c1c;font-weight:400;letter-spacing:0.28px;left:1219.5px;">Vertex Colors</div>
<div class="t" style="top:632.69px;font-size:18.8px;color:#1c1c1c;font-weight:400;right:21.700000000000045px;">No</div>
<div class="t" style="top:689.89px;font-size:18.8px;color:#1c1c1c;font-weight:400;letter-spacing:0.38px;left:1219.5px;">Material IDs</div>
<div class="t" style="top:689.89px;font-size:18.8px;color:#1c1c1c;font-weight:400;right:21.700000000000045px;">1</div>
<div class="t" style="top:830.59px;font-size:18.8px;color:#1c1c1c;font-weight:400;letter-spacing:0.5px;left:1219.5px;">Albedo</div>
<div class="t" style="top:830.59px;font-size:18.8px;color:#1c1c1c;font-weight:400;right:21.700000000000045px;">0</div>
<div class="t" style="top:887.89px;font-size:18.8px;color:#1c1c1c;font-weight:400;letter-spacing:0.45px;left:1219.5px;">Normal</div>
<div class="t" style="top:887.89px;font-size:18.8px;color:#1c1c1c;font-weight:400;right:21.700000000000045px;">0</div>
<div class="t" style="top:965.07px;font-size:20px;color:#2a2a2a;font-weight:400;left:1259.5px;">Quick Animations</div>
<div class="t" style="top:965.07px;font-size:20px;color:#2a2a2a;font-weight:400;letter-spacing:-0.4px;left:1478.5px;">× 1.0</div>
<svg class="abs" style="left:0;top:0;pointer-events:none" width="1554" height="1000"><path d="M1426.5,979.4 L1434.5,970 L1442.5,979.4" fill="none" stroke="#777" stroke-width="1.5"/></svg>
<svg class="abs" style="left:0;top:0;pointer-events:none" width="1554" height="1000"><path d="M1534.5,979.4 L1542.5,970 L1550.5,979.4" fill="none" stroke="#777" stroke-width="1.5"/></svg>
<svg class="abs" style="left:1215px;top:960px" width="36" height="26" viewBox="1215 960 36 26" fill="none" stroke="#222" stroke-width="1.6" stroke-linejoin="round">
<path d="M1238.5,965.2 L1245.8,968.6 L1245.8,977.6 L1238.5,981.4 L1231.2,977.6 L1231.2,968.6 Z M1231.2,968.6 L1238.5,972.2 L1245.8,968.6 M1238.5,972.2 V981.4"/>
<path d="M1221,968.6 H1227.2 M1219.4,972.6 H1227.2 M1221,976.6 H1227.2" stroke-width="1.6"/>
</svg>
</body>
</html>
